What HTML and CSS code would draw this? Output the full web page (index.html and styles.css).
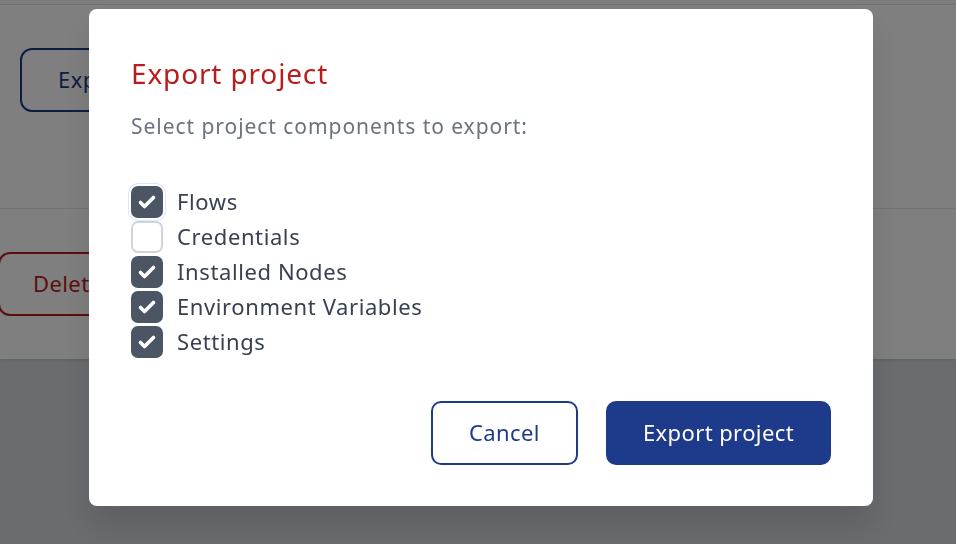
FILE: index.html
```html
<!DOCTYPE html>
<html lang="en">
<head>
<meta charset="utf-8">
<title>Export project</title>
<link rel="stylesheet" href="styles.css">
</head>
<body>
<div class="page">
  <div class="topbar"></div>
  <div class="card">
    <section class="section">
      <button class="btn-outline-blue">Export project</button>
    </section>
    <section class="section section-danger">
      <button class="btn-outline-red">Delete project</button>
    </section>
  </div>
</div>

<div class="overlay"></div>

<div class="modal" role="dialog">
  <h2 class="modal-title">Export project</h2>
  <p class="modal-subtitle">Select project components to export:</p>
  <ul class="options">
    <li class="option">
      <span class="box checked focused"><svg viewBox="0 0 32 32" class="tick"><polyline points="9.5,16.5 13.5,20.5 22.5,11.5"/></svg></span>
      <span class="label">Flows</span>
    </li>
    <li class="option">
      <span class="box"></span>
      <span class="label">Credentials</span>
    </li>
    <li class="option">
      <span class="box checked"><svg viewBox="0 0 32 32" class="tick"><polyline points="9.5,16.5 13.5,20.5 22.5,11.5"/></svg></span>
      <span class="label">Installed Nodes</span>
    </li>
    <li class="option">
      <span class="box checked"><svg viewBox="0 0 32 32" class="tick"><polyline points="9.5,16.5 13.5,20.5 22.5,11.5"/></svg></span>
      <span class="label">Environment Variables</span>
    </li>
    <li class="option">
      <span class="box checked"><svg viewBox="0 0 32 32" class="tick"><polyline points="9.5,16.5 13.5,20.5 22.5,11.5"/></svg></span>
      <span class="label">Settings</span>
    </li>
  </ul>
  <div class="actions">
    <button class="btn btn-secondary">Cancel</button>
    <button class="btn btn-primary">Export project</button>
  </div>
</div>
</body>
</html>
```

FILE: styles.css
```css
* { box-sizing: border-box; }
html, body { margin: 0; padding: 0; }
body {
  width: 956px;
  height: 544px;
  overflow: hidden;
  background: #d6d8df;
  font-family: "Noto Sans", "Open Sans", sans-serif;
}
button { font-family: inherit; cursor: pointer; }

.page { display: flex; flex-direction: column; }
.topbar {
  height: 5px;
  background: #fafafa;
  border-bottom: 1px solid #e6e6e6;
}
.card {
  background: #ffffff;
  display: flex;
  flex-direction: column;
  box-shadow: 0 1px 3px rgba(0,0,0,0.12);
}
.section {
  height: 204px;
  padding: 43px 20px 0 20px;
  border-bottom: 1px solid #e5e6e8;
}
.section-danger {
  height: 150px;
  border-bottom: none;
  padding: 43px 0 0 0;
}
.btn-outline-blue,
.btn-outline-red {
  height: 64px;
  padding: 0 36px 2px 36px;
  background: #fff;
  border-radius: 12px;
  font-size: 22px;
  letter-spacing: 0.4px;
}
.btn-outline-blue { border: 2px solid #1e3a8a; color: #1e3a8a; }
.btn-outline-red { border: 2px solid #b91c1c; color: #b91c1c; margin-left: -2px; padding-left: 33px; }

.overlay {
  position: fixed;
  inset: 0;
  background: rgba(0,0,0,0.5);
}

.modal {
  position: fixed;
  left: 89px;
  top: 9px;
  width: 784px;
  height: 497px;
  background: #fff;
  border-radius: 8px;
  box-shadow: 0 20px 30px rgba(0,0,0,0.12);
  padding: 46px 42px 41px 42px;
  display: flex;
  flex-direction: column;
}
.modal-title {
  margin: 0;
  font-size: 28px;
  line-height: 36px;
  font-weight: 400;
  letter-spacing: 0.85px;
  color: #b91c1c;
}
.modal-subtitle {
  margin: 21px 0 0 0;
  font-size: 21px;
  line-height: 28px;
  letter-spacing: 0.95px;
  color: #6b7280;
}
.options {
  list-style: none;
  margin: 46px 0 0 0;
  padding: 0;
  display: flex;
  flex-direction: column;
  gap: 3px;
}
.option {
  display: flex;
  align-items: center;
  gap: 14px;
  height: 32px;
}
.box {
  width: 32px;
  height: 32px;
  border-radius: 7px;
  border: 2px solid #d1d5db;
  background: #fff;
  flex: none;
  display: flex;
}
.box.checked {
  border: none;
  background: #4b5563;
}
.box.focused {
  box-shadow: 0 0 0 2px #fff, 0 0 0 3px #dbe5fd;
}
.tick {
  width: 32px;
  height: 32px;
  fill: none;
  stroke: #fff;
  stroke-width: 3.6;
  stroke-linecap: round;
  stroke-linejoin: round;
}
.label {
  font-size: 22px;
  line-height: 30px;
  padding-bottom: 2px;
  letter-spacing: 0.6px;
  color: #374151;
}
.actions {
  margin-top: auto;
  display: flex;
  justify-content: flex-end;
  gap: 28px;
}
.btn {
  height: 64px;
  border-radius: 10px;
  font-size: 22px;
  letter-spacing: 0.4px;
  padding: 0 0 2px 0;
}
.btn-secondary {
  width: 147px;
  background: #fff;
  border: 2px solid #1e3a8a;
  color: #1e3a8a;
}
.btn-primary {
  width: 225px;
  background: #1e3a8a;
  border: 2px solid #1e3a8a;
  color: #fff;
}
```
